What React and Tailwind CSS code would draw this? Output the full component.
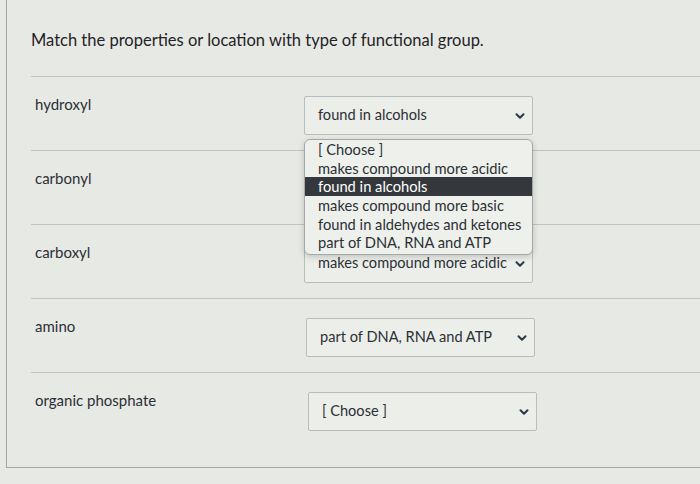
import { ChevronDown } from "lucide-react";

const OPTIONS = [
  "[ Choose ]",
  "makes compound more acidic",
  "found in alcohols",
  "makes compound more basic",
  "found in aldehydes and ketones",
  "part of DNA, RNA and ATP",
];

const ROWS = [
  { label: "hydroxyl", value: "found in alcohols", shift: "ml-[0px]" },
  { label: "carbonyl", value: "makes compound more acidic", shift: "ml-[0px]" },
  { label: "carboxyl", value: "makes compound more acidic", shift: "ml-[0px]" },
  { label: "amino", value: "part of DNA, RNA and ATP", shift: "ml-[2px]" },
  { label: "organic phosphate", value: "[ Choose ]", shift: "ml-[4px]" },
];

function Select({ value, shift }) {
  return (
    <div
      className={`${shift} mt-[19px] w-[229px] h-[39px] flex items-center justify-between pl-[13px] pr-[5px] border border-[#b9bdbb] rounded-[2px] bg-[#eceeea] text-[14.6px] text-[#2b3035]`}
    >
      <span className="whitespace-nowrap -translate-y-[1px]">{value}</span>
      <ChevronDown size={14} strokeWidth={3.5} className="shrink-0 text-[#2d3a45]" />
    </div>
  );
}

export default function App() {
  return (
    <div
      className="relative w-[700px] h-[484px] overflow-hidden bg-[#e7e9e5] text-[#2b3035]"
      style={{ fontFamily: "Lato, 'Liberation Sans', sans-serif" }}
    >
      <div className="ml-[6px] h-[468px] border-l border-b border-[#a3a7a5]">
        <div className="pl-[24px] pt-[28px] h-[76px] text-[16.5px] text-[#1f2326]">
          Match the properties or location with type of functional group.
        </div>

        {ROWS.map((row) => (
          <div
            key={row.label}
            className="ml-[24px] h-[74px] border-t border-[#bfc3c1] flex"
          >
            <div className="w-[273px] shrink-0 pl-[4px] pt-[16px] text-[15px] whitespace-nowrap">
              {row.label}
            </div>
            <Select value={row.value} shift={row.shift} />
          </div>
        ))}
      </div>

      {/* open list of the first select */}
      <div className="absolute left-[304px] top-[139px] w-[229px] pb-[2px] rounded-[6px] border border-[#a4a8ab] bg-[#eef0ec] shadow-[0_2px_6px_rgba(0,0,0,0.18)] overflow-hidden">
        {OPTIONS.map((opt) => (
          <div
            key={opt}
            className={
              opt === "found in alcohols"
                ? "h-[18.7px] leading-[18.7px] pl-[13px] text-[14.7px] whitespace-nowrap bg-[#34383c] text-white"
                : "h-[18.7px] leading-[18.7px] pl-[13px] text-[14.7px] whitespace-nowrap text-[#2b3035]"
            }
          >
            {opt}
          </div>
        ))}
      </div>
    </div>
  );
}
